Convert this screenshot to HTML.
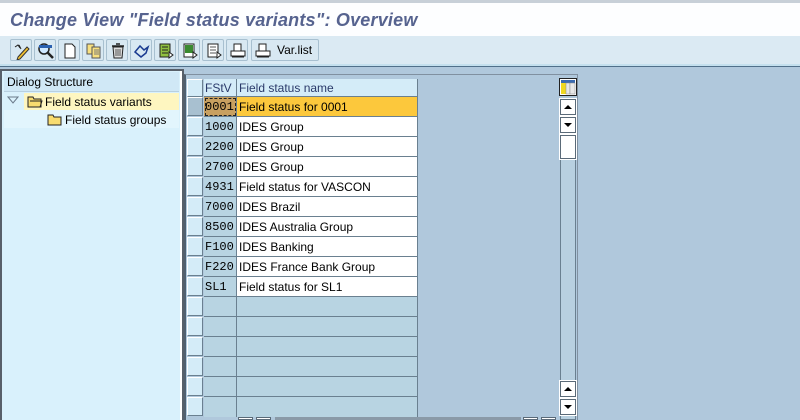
<!DOCTYPE html>
<html><head><meta charset="utf-8"><style>
*{margin:0;padding:0;box-sizing:border-box}
body{width:800px;height:420px;overflow:hidden;background:#b0c8dc;font-family:"Liberation Sans",sans-serif;font-size:12px;position:relative}
.a{position:absolute}
.title{left:0;top:0;width:800px;height:36px;background:#fdfeff;border-top:3px solid #c8d0d8}
.title span{position:absolute;left:10px;top:7px;font-size:18px;font-weight:bold;font-style:italic;color:#56638f;letter-spacing:0.2px}
.tb{left:0;top:36px;width:800px;height:30px;background:#dbeaf3}
.sep{left:0;top:64px;width:800px;height:3px;background:#c4e0ee;border-bottom:1px solid #50708a}
.btn{position:absolute;top:39px;width:22px;height:22px;border:1px solid #a8c0d0;border-radius:2px;background:#d8e8f2}
.btn svg{position:absolute;left:2px;top:2px}
.lp{left:0;top:69px;width:184px;height:351px;background:#d9f1fc;border:2px solid #58606a;border-bottom:none;box-shadow:inset -2px 0 0 #fff}
.lh{left:4px;top:72px;width:175px;height:20px;background:#d0e8f6;border-bottom:1px solid #b8d0e0;padding:3px 0 0 3px}
.r1{left:24px;top:93px;width:155px;height:17px;background:#fef6c0}
.r2{left:4px;top:110px;width:175px;height:18px;background:#e2f5fd}
.grid{left:184px;top:74px;width:394px;height:346px;border-left:2px solid #506070;border-top:1px solid #8090a0;border-right:1px solid #8090a0}
.sel{position:absolute;left:187px;width:16px;height:19px;background:#d4ecf8;border:1px solid #fff;border-right-color:#6a8090;border-bottom-color:#6a8090}
.c1{position:absolute;left:204px;width:33px;height:20px;background:#b8d4e2;border-bottom:1px solid #6a8090;border-right:1px solid #6a8090;font-family:"Liberation Mono",monospace;font-size:12px;padding:3px 0 0 1px}
.c2{position:absolute;left:237px;width:181px;height:20px;background:#fff;border-bottom:1px solid #6a8090;border-right:1px solid #6a8090;padding:3px 0 0 2px}
.e{background:#b8d4e2}
.sb{position:absolute;left:560px;width:16px;height:16px;background:#fff;border:1px solid #5a6a78;box-shadow:0 0 0 1px #fff}
</style></head><body>
<div class="a title"><span>Change View "Field status variants": Overview</span></div>
<div class="a tb"></div>
<div class="a sep"></div>
<div class="btn" style="left:10px"><svg width="18" height="18"><path d="M2 5l3-2 2 3M6 3l2 4" stroke="#222" fill="none"/><path d="M5 15l9-10 2 2-9 10-3 1z" fill="#f0c030" stroke="#333"/></svg></div>
<div class="btn" style="left:34px"><svg width="18" height="18"><circle cx="7" cy="7" r="5" fill="#cfe8ff" stroke="#222" stroke-width="1.5"/><rect x="2" y="3" width="13" height="3" fill="#2a60b0"/><path d="M10 10l6 6" stroke="#222" stroke-width="2.5"/></svg></div>
<div class="btn" style="left:58px"><svg width="18" height="18"><path d="M4 2h7l3 3v11H4z" fill="#fff" stroke="#222"/></svg></div>
<div class="btn" style="left:82px"><svg width="18" height="18"><path d="M2 2h7v10H2z" fill="#f8e080" stroke="#555"/><path d="M7 5h8v11H7z" fill="#f8e080" stroke="#555"/><path d="M9 8h5M9 10h5M9 12h5" stroke="#777"/></svg></div>
<div class="btn" style="left:106px"><svg width="18" height="18"><path d="M3 4h12M7 2h4" stroke="#222" stroke-width="1.5"/><path d="M4 5h10l-1 11H5z" fill="#ddd" stroke="#222"/><path d="M7 7v7M9 7v7M11 7v7" stroke="#555"/></svg></div>
<div class="btn" style="left:130px"><svg width="18" height="18"><path d="M2 10l5-6 4 4 4-3-2 6-5 4z" fill="none" stroke="#1a3a90" stroke-width="1.5"/></svg></div>
<div class="btn" style="left:154px"><svg width="18" height="18"><rect x="3" y="2" width="10" height="13" fill="#90c040" stroke="#222"/><path d="M5 5h6M5 8h6M5 11h6" stroke="#222"/><path d="M12 10l4 3-4 3z" fill="#fff" stroke="#222"/></svg></div>
<div class="btn" style="left:178px"><svg width="18" height="18"><rect x="3" y="2" width="10" height="13" fill="#fff" stroke="#222"/><rect x="4" y="3" width="8" height="8" fill="#3a8a30"/><path d="M12 10l4 3-4 3z" fill="#fff" stroke="#222"/></svg></div>
<div class="btn" style="left:202px"><svg width="18" height="18"><rect x="3" y="2" width="10" height="13" fill="#fff" stroke="#222"/><path d="M5 5h6M5 8h6M5 11h6" stroke="#555"/><path d="M12 10l4 3-4 3z" fill="#fff" stroke="#222"/></svg></div>
<div class="btn" style="left:226px"><svg width="18" height="18"><path d="M5 2h7v7H5z" fill="#fff" stroke="#222"/><path d="M2 9h14v5H2z" fill="#fff" stroke="#222"/><path d="M3 15h12" stroke="#222"/></svg></div>
<div class="btn" style="left:251px;width:68px"><svg width="18" height="18"><path d="M5 2h7v7H5z" fill="#fff" stroke="#222"/><path d="M2 9h14v5H2z" fill="#fff" stroke="#222"/><path d="M3 15h12" stroke="#222"/></svg><span style="position:absolute;left:25px;top:3px;font-size:12px">Var.list</span></div>

<div class="a lp"></div>
<div class="a lh">Dialog Structure</div>
<div class="a r2"></div>
<div class="a r1"></div>
<svg class="a" style="left:7px;top:96px" width="12" height="8"><path d="M1 1h10l-5 6z" fill="none" stroke="#6a7a8a"/></svg>
<svg class="a" style="left:27px;top:94px" width="16" height="14"><path d="M1 3h5l1 2h7v8H1z" fill="#f8dc70" stroke="#222"/><path d="M3 7h12l-2 6" fill="none" stroke="#222"/></svg>
<div class="a" style="left:45px;top:95px">Field status variants</div>
<svg class="a" style="left:47px;top:112px" width="16" height="14"><path d="M1 3h5l1 2h7v8H1z" fill="#f8dc70" stroke="#222"/></svg>
<div class="a" style="left:65px;top:113px">Field status groups</div>

<div class="a grid"></div>
<div class="sel" style="top:79px;height:18px"></div>
<div class="c1" style="top:79px;height:18px;background:#d4ecf8;font-family:'Liberation Sans',sans-serif;padding:2px 0 0 1px;color:#2a3a6a">FStV</div>
<div class="c2" style="top:79px;height:18px;background:#d4ecf8;padding:2px 0 0 2px;color:#2a3a6a">Field status name</div>
<div class="sel" style="top:97px;background:#a8c0d0"></div>
<div class="c1" style="top:97px;background:#c8a060;outline:1px dashed #222;outline-offset:-2px">0001</div>
<div class="c2" style="top:97px;background:#fcc83c">Field status for 0001</div>
<div class="sel" style="top:117px"></div><div class="c1" style="top:117px">1000</div><div class="c2" style="top:117px">IDES Group</div>
<div class="sel" style="top:137px"></div><div class="c1" style="top:137px">2200</div><div class="c2" style="top:137px">IDES Group</div>
<div class="sel" style="top:157px"></div><div class="c1" style="top:157px">2700</div><div class="c2" style="top:157px">IDES Group</div>
<div class="sel" style="top:177px"></div><div class="c1" style="top:177px">4931</div><div class="c2" style="top:177px">Field status for VASCON</div>
<div class="sel" style="top:197px"></div><div class="c1" style="top:197px">7000</div><div class="c2" style="top:197px">IDES Brazil</div>
<div class="sel" style="top:217px"></div><div class="c1" style="top:217px">8500</div><div class="c2" style="top:217px">IDES Australia Group</div>
<div class="sel" style="top:237px"></div><div class="c1" style="top:237px">F100</div><div class="c2" style="top:237px">IDES Banking</div>
<div class="sel" style="top:257px"></div><div class="c1" style="top:257px">F220</div><div class="c2" style="top:257px">IDES France Bank Group</div>
<div class="sel" style="top:277px"></div><div class="c1" style="top:277px">SL1</div><div class="c2" style="top:277px">Field status for SL1</div>
<div class="sel" style="top:297px"></div><div class="c1" style="top:297px"></div><div class="c2 e" style="top:297px"></div>
<div class="sel" style="top:317px"></div><div class="c1" style="top:317px"></div><div class="c2 e" style="top:317px"></div>
<div class="sel" style="top:337px"></div><div class="c1" style="top:337px"></div><div class="c2 e" style="top:337px"></div>
<div class="sel" style="top:357px"></div><div class="c1" style="top:357px"></div><div class="c2 e" style="top:357px"></div>
<div class="sel" style="top:377px"></div><div class="c1" style="top:377px"></div><div class="c2 e" style="top:377px"></div>
<div class="sel" style="top:397px"></div><div class="c1" style="top:397px;border-bottom:none"></div><div class="c2 e" style="top:397px;border-bottom:none"></div>
<div class="a" style="left:238px;top:417px;width:15px;height:3px;background:#fff;border:1px solid #5a6a78"></div>
<div class="a" style="left:256px;top:417px;width:15px;height:3px;background:#fff;border:1px solid #5a6a78"></div>
<div class="a" style="left:275px;top:417px;width:246px;height:3px;background:#8a9aa8"></div>
<div class="a" style="left:523px;top:417px;width:15px;height:3px;background:#fff;border:1px solid #5a6a78"></div>
<div class="a" style="left:541px;top:417px;width:15px;height:3px;background:#fff;border:1px solid #5a6a78"></div>

<svg class="a" style="left:559px;top:78px" width="18" height="18"><rect x="0.5" y="0.5" width="17" height="17" fill="#fff" stroke="#222"/><rect x="2" y="2" width="14" height="3" fill="#3a6ab0"/><rect x="2" y="5" width="5" height="11" fill="#f0d820"/><rect x="7" y="5" width="4" height="11" fill="#e8e8e8" stroke="#888" stroke-width=".5"/><rect x="11" y="5" width="5" height="11" fill="#e8e8e8" stroke="#888" stroke-width=".5"/></svg>
<div class="a" style="left:560px;top:98px;width:16px;height:322px;background:#b8d0e0;border:1px solid #6a8090"></div>
<div class="sb" style="top:99px"><svg width="14" height="14"><path d="M3 9h8l-4-4z" fill="#000"/></svg></div>
<div class="sb" style="top:117px"><svg width="14" height="14"><path d="M3 5h8l-4 4z" fill="#000"/></svg></div>
<div class="sb" style="top:135px;height:24px"></div>
<div class="sb" style="top:381px"><svg width="14" height="14"><path d="M3 9h8l-4-4z" fill="#000"/></svg></div>
<div class="sb" style="top:399px"><svg width="14" height="14"><path d="M3 5h8l-4 4z" fill="#000"/></svg></div>
</body></html>
